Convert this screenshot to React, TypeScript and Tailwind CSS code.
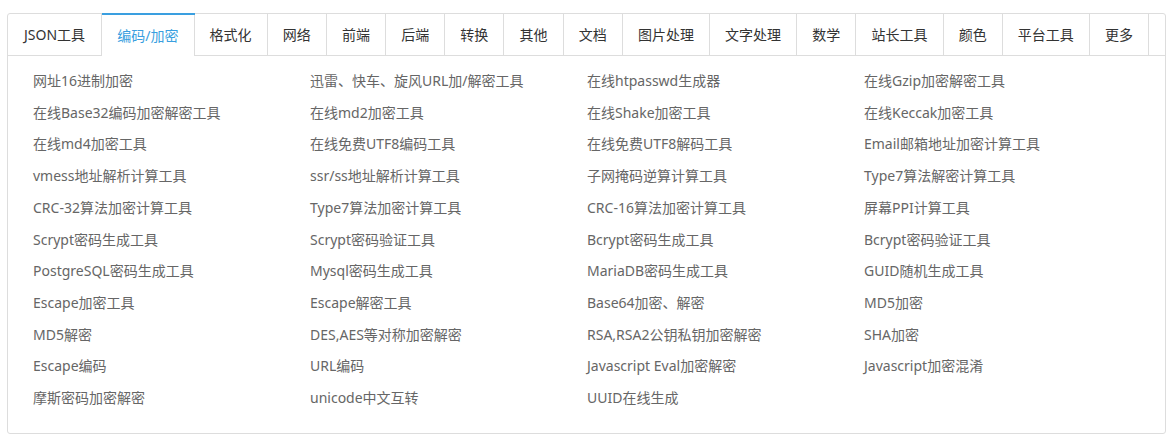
import React from "react"

const tabs = [
  "JSON工具",
  "编码/加密",
  "格式化",
  "网络",
  "前端",
  "后端",
  "转换",
  "其他",
  "文档",
  "图片处理",
  "文字处理",
  "数学",
  "站长工具",
  "颜色",
  "平台工具",
  "更多",
]

const tools = [
  "网址16进制加密", "迅雷、快车、旋风URL加/解密工具", "在线htpasswd生成器", "在线Gzip加密解密工具",
  "在线Base32编码加密解密工具", "在线md2加密工具", "在线Shake加密工具", "在线Keccak加密工具",
  "在线md4加密工具", "在线免费UTF8编码工具", "在线免费UTF8解码工具", "Email邮箱地址加密计算工具",
  "vmess地址解析计算工具", "ssr/ss地址解析计算工具", "子网掩码逆算计算工具", "Type7算法解密计算工具",
  "CRC-32算法加密计算工具", "Type7算法加密计算工具", "CRC-16算法加密计算工具", "屏幕PPI计算工具",
  "Scrypt密码生成工具", "Scrypt密码验证工具", "Bcrypt密码生成工具", "Bcrypt密码验证工具",
  "PostgreSQL密码生成工具", "Mysql密码生成工具", "MariaDB密码生成工具", "GUID随机生成工具",
  "Escape加密工具", "Escape解密工具", "Base64加密、解密", "MD5加密",
  "MD5解密", "DES,AES等对称加密解密", "RSA,RSA2公钥私钥加密解密", "SHA加密",
  "Escape编码", "URL编码", "Javascript Eval加密解密", "Javascript加密混淆",
  "摩斯密码加密解密", "unicode中文互转", "UUID在线生成",
]

const ACTIVE = 1

export default function App() {
  return (
    <div className="min-h-[438px] bg-white pt-[13px] px-[7px] font-['Noto_Sans','Noto_Sans_CJK_SC',sans-serif]">
      <div className="w-[1159px] border border-[#dddddd] rounded-[3px]">
        {/* tab bar */}
        <div className="flex h-[42px]">
          {tabs.map((tab, i) => (
            <div
              key={tab}
              className={
                i === ACTIVE
                  ? "relative flex items-center px-[15.1px] border-r border-[#dddddd] text-[14px] text-[#3a9fe0] bg-white"
                  : i === 0
                    ? "flex items-center pl-[16px] pr-[16px] border-r border-b border-[#dddddd] text-[14px] text-[#333333]"
                    : "flex items-center px-[15.1px] border-r border-b border-[#dddddd] text-[14px] text-[#333333]"
              }
            >
              {i === ACTIVE && <span className="absolute -top-px left-0 -right-px h-[2px] bg-[#3a9fe0]" />}
              {tab}
            </div>
          ))}
          <div className="flex-1 border-b border-[#dddddd]" />
        </div>

        {/* tool links */}
        <ul className="grid grid-cols-4 pl-[25px] pr-[24px] pt-[9px] pb-[19px]">
          {tools.map((t) => (
            <li key={t} className="text-[14px] leading-[31.7px] text-[#666666] whitespace-nowrap">
              {t}
            </li>
          ))}
        </ul>
      </div>
    </div>
  )
}
